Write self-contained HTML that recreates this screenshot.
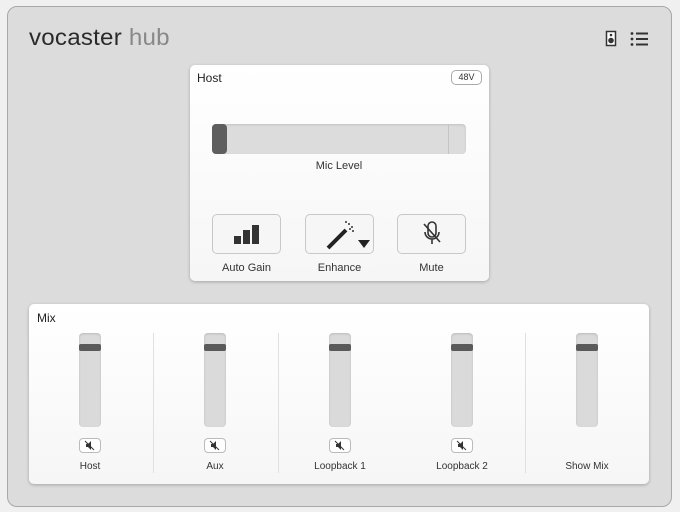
<!DOCTYPE html><html><head><style>
*{box-sizing:border-box;margin:0;padding:0}
body{width:680px;height:512px;background:#f0f0f0;font-family:"Liberation Sans",sans-serif;position:relative;overflow:hidden}
.outer{position:absolute;left:7px;top:6px;width:665px;height:501px;background:#dcdcdc;border:1px solid #a8a8a8;border-radius:10px}
.a{position:absolute}
.card{position:absolute;background:linear-gradient(#fff,#f6f6f6);border-radius:5px;box-shadow:0 1px 3px rgba(0,0,0,.25)}
.t{position:absolute;font-size:11px;color:#333;text-align:center}
.btn{position:absolute;width:69px;height:40px;border:1px solid #c8c8c8;border-radius:5px;background:#f6f6f6}
.trk{position:absolute;width:22px;height:94px;top:333px;background:#dadada;border-radius:4px;box-shadow:inset 0 1px 2px rgba(0,0,0,.15)}
.th{position:absolute;width:22px;height:7px;top:344px;background:#5a5a5a;border-radius:2px}
.mb{position:absolute;width:22px;height:15px;top:438px;border:1px solid #bbb;border-radius:4px;background:#fff}
.dv{position:absolute;width:1px;top:333px;height:140px;background:#e0e0e0}
</style></head><body>
<div class="outer"></div>
<div class="a" style="left:29px;top:24px;font-size:23px;color:#2a2a2a;letter-spacing:0.2px;transform:scaleX(1.05);transform-origin:left">vocaster <span style="color:#888">hub</span></div>
<svg class="a" style="left:605px;top:30px" width="45" height="18">
<rect x="1.5" y="1.5" width="9" height="14" fill="#fff" stroke="#333" stroke-width="1.5"/><circle cx="6" cy="5" r="1.3" fill="#333"/><circle cx="6" cy="10.5" r="2.8" fill="#333"/>
<circle cx="27" cy="3.5" r="1.4" fill="#333"/><circle cx="27" cy="9" r="1.4" fill="#333"/><circle cx="27" cy="14.5" r="1.4" fill="#333"/>
<rect x="31" y="2.5" width="12" height="2" fill="#333"/><rect x="31" y="8" width="12" height="2" fill="#333"/><rect x="31" y="13.5" width="12" height="2" fill="#333"/></svg>
<div class="card" style="left:190px;top:65px;width:299px;height:216px"></div>
<div class="a" style="left:197px;top:71px;font-size:12px;color:#222">Host</div>
<div class="a" style="left:451px;top:70px;width:31px;height:15px;border:1px solid #aaa;border-radius:5px;font-size:9px;text-align:center;line-height:13px;color:#333">48V</div>
<div class="a" style="left:212px;top:124px;width:254px;height:30px;background:#dcdcdc;border-radius:4px;box-shadow:inset 0 1px 2px rgba(0,0,0,.12)"></div>
<div class="a" style="left:448px;top:124px;width:1px;height:30px;background:#c4c4c4"></div>
<div class="a" style="left:212px;top:124px;width:15px;height:30px;background:#5e5e5e;border-radius:4px"></div>
<div class="t" style="left:212px;width:254px;top:160px">Mic Level</div>
<div class="btn" style="left:212px;top:214px"><svg width="69" height="40"><rect x="21" y="21" width="7" height="8" fill="#333"/><rect x="30" y="15" width="7" height="14" fill="#333"/><rect x="39" y="10" width="7" height="19" fill="#333"/></svg></div>
<div class="btn" style="left:305px;top:214px"><svg width="69" height="40"><line x1="22" y1="33" x2="40" y2="15" stroke="#222" stroke-width="4"/><g fill="#333"><circle cx="43" cy="9" r="1"/><circle cx="46" cy="12" r="1"/><circle cx="40" cy="7" r="1"/><circle cx="47" cy="16" r="1"/><circle cx="44" cy="14" r="1"/></g><polygon points="52,25 64,25 58,33" fill="#222"/></svg></div>
<div class="btn" style="left:397px;top:214px"><svg width="69" height="40"><rect x="30" y="7" width="8" height="15" rx="4" fill="none" stroke="#333" stroke-width="1.6"/><path d="M27 17 a7 7 0 0 0 14 0 M34 24 v5" fill="none" stroke="#333" stroke-width="1.6"/><line x1="26" y1="9" x2="42" y2="27" stroke="#333" stroke-width="1.6"/></svg></div>
<div class="t" style="left:212px;width:69px;top:262px">Auto Gain</div>
<div class="t" style="left:305px;width:69px;top:262px">Enhance</div>
<div class="t" style="left:397px;width:69px;top:262px">Mute</div>
<div class="card" style="left:29px;top:304px;width:620px;height:180px"></div>
<div class="a" style="left:37px;top:311px;font-size:12px;color:#222">Mix</div>
<div class="dv" style="left:153px"></div><div class="dv" style="left:278px"></div><div class="dv" style="left:525px"></div>
<div class="trk" style="left:79px"></div><div class="th" style="left:79px"></div><div class="mb" style="left:79px"><svg width="20" height="13"><path d="M6 5h2l3-3v9l-3-3H6z" fill="#333"/><line x1="5" y1="2" x2="14" y2="11" stroke="#333"/></svg></div><div class="t" style="left:40px;width:100px;top:461px;font-size:10px">Host</div>
<div class="trk" style="left:204px"></div><div class="th" style="left:204px"></div><div class="mb" style="left:204px"><svg width="20" height="13"><path d="M6 5h2l3-3v9l-3-3H6z" fill="#333"/><line x1="5" y1="2" x2="14" y2="11" stroke="#333"/></svg></div><div class="t" style="left:165px;width:100px;top:461px;font-size:10px">Aux</div>
<div class="trk" style="left:329px"></div><div class="th" style="left:329px"></div><div class="mb" style="left:329px"><svg width="20" height="13"><path d="M6 5h2l3-3v9l-3-3H6z" fill="#333"/><line x1="5" y1="2" x2="14" y2="11" stroke="#333"/></svg></div><div class="t" style="left:290px;width:100px;top:461px;font-size:10px">Loopback 1</div>
<div class="trk" style="left:451px"></div><div class="th" style="left:451px"></div><div class="mb" style="left:451px"><svg width="20" height="13"><path d="M6 5h2l3-3v9l-3-3H6z" fill="#333"/><line x1="5" y1="2" x2="14" y2="11" stroke="#333"/></svg></div><div class="t" style="left:412px;width:100px;top:461px;font-size:10px">Loopback 2</div>
<div class="trk" style="left:576px"></div><div class="th" style="left:576px"></div><div class="t" style="left:537px;width:100px;top:461px;font-size:10px">Show Mix</div>
</body></html>
